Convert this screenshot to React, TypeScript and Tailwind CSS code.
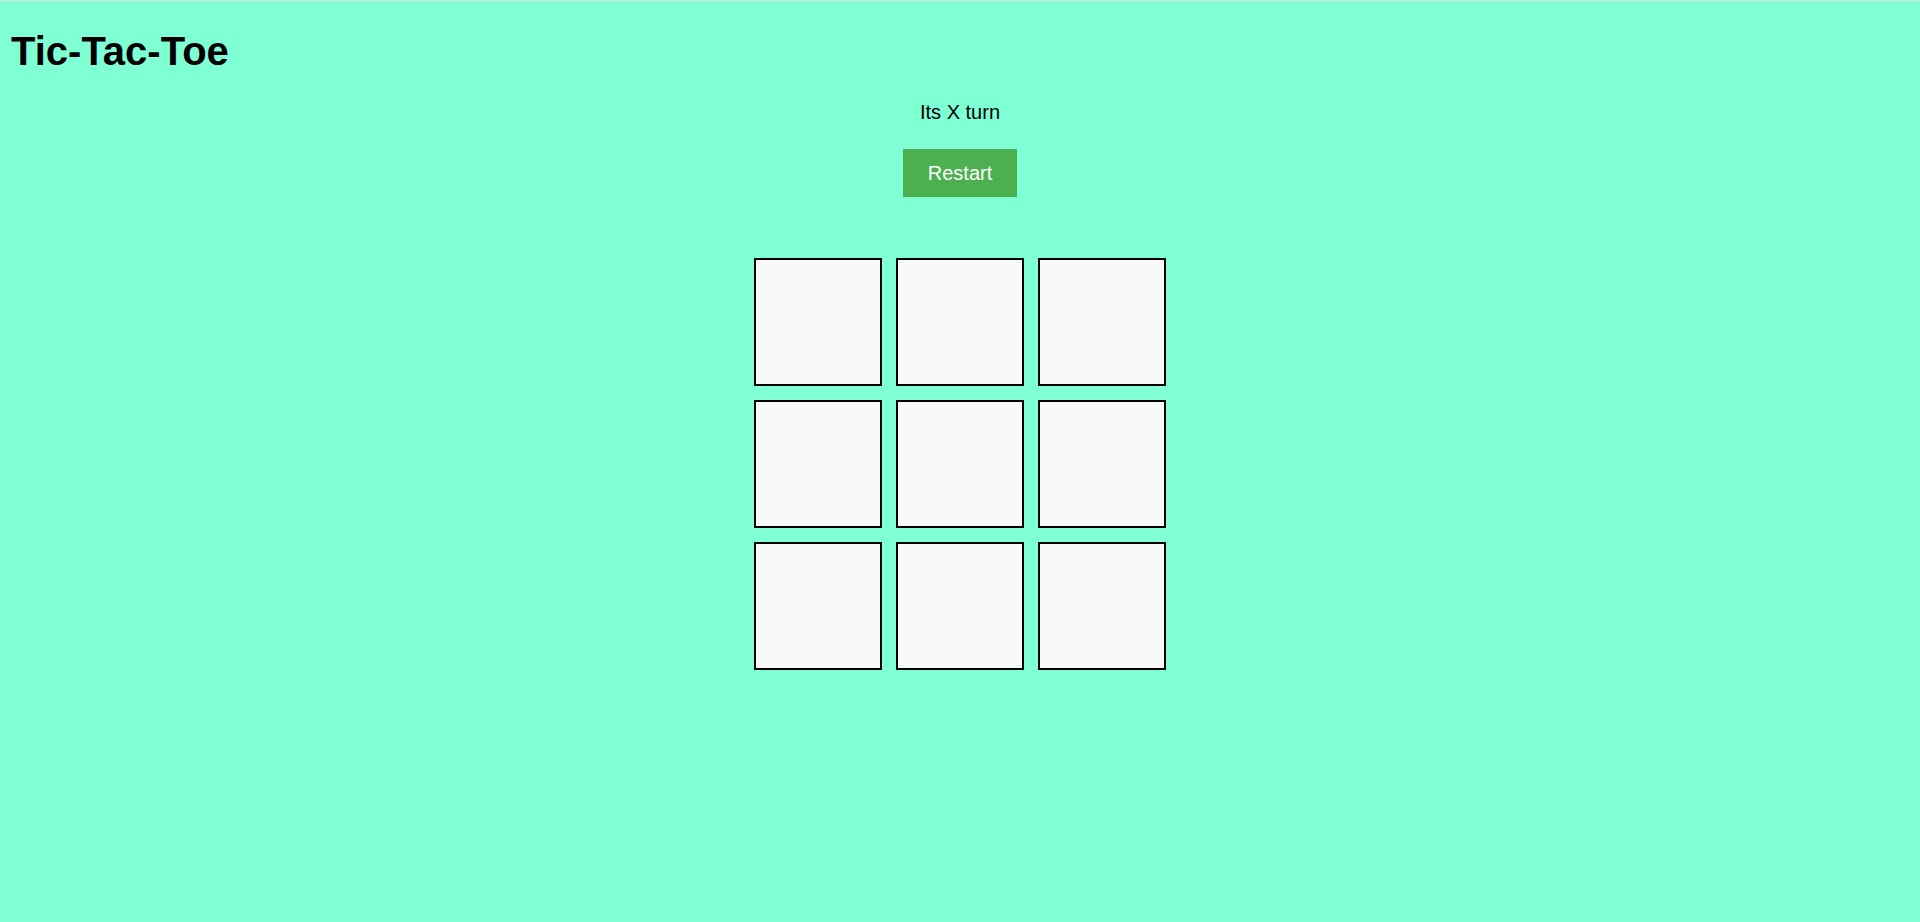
import { useState } from 'react'

type Cell = 'X' | 'O' | null

export default function App() {
  const [board, setBoard] = useState<Cell[]>(Array(9).fill(null))
  const [turn, setTurn] = useState<'X' | 'O'>('X')

  const play = (i: number) => {
    if (board[i]) return
    const next = [...board]
    next[i] = turn
    setBoard(next)
    setTurn(turn === 'X' ? 'O' : 'X')
  }

  const restart = () => {
    setBoard(Array(9).fill(null))
    setTurn('X')
  }

  return (
    <div className="min-h-screen bg-[#7fffd4] border-t border-[#e0e0e0] font-['Liberation_Sans',Arial,sans-serif] text-black">
      <h1 className="mt-[30px] ml-[11px] text-[40px] leading-[40px] font-bold">Tic-Tac-Toe</h1>

      <p className="mt-[31px] text-center text-[20px] leading-[20px]">Its {turn} turn</p>

      <button
        onClick={restart}
        className="mt-[27px] mx-auto block w-[114px] h-[48px] bg-[#4caf50] text-white text-[20px] leading-none"
      >
        Restart
      </button>

      {/* Board */}
      <div className="mt-[61px] grid grid-cols-[repeat(3,128px)] gap-[14px] justify-center">
        {board.map((cell, i) => (
          <button
            key={i}
            onClick={() => play(i)}
            className="w-[128px] h-[128px] border-2 border-black bg-[#f9f9f9] text-[48px] font-bold"
          >
            {cell}
          </button>
        ))}
      </div>
    </div>
  )
}
